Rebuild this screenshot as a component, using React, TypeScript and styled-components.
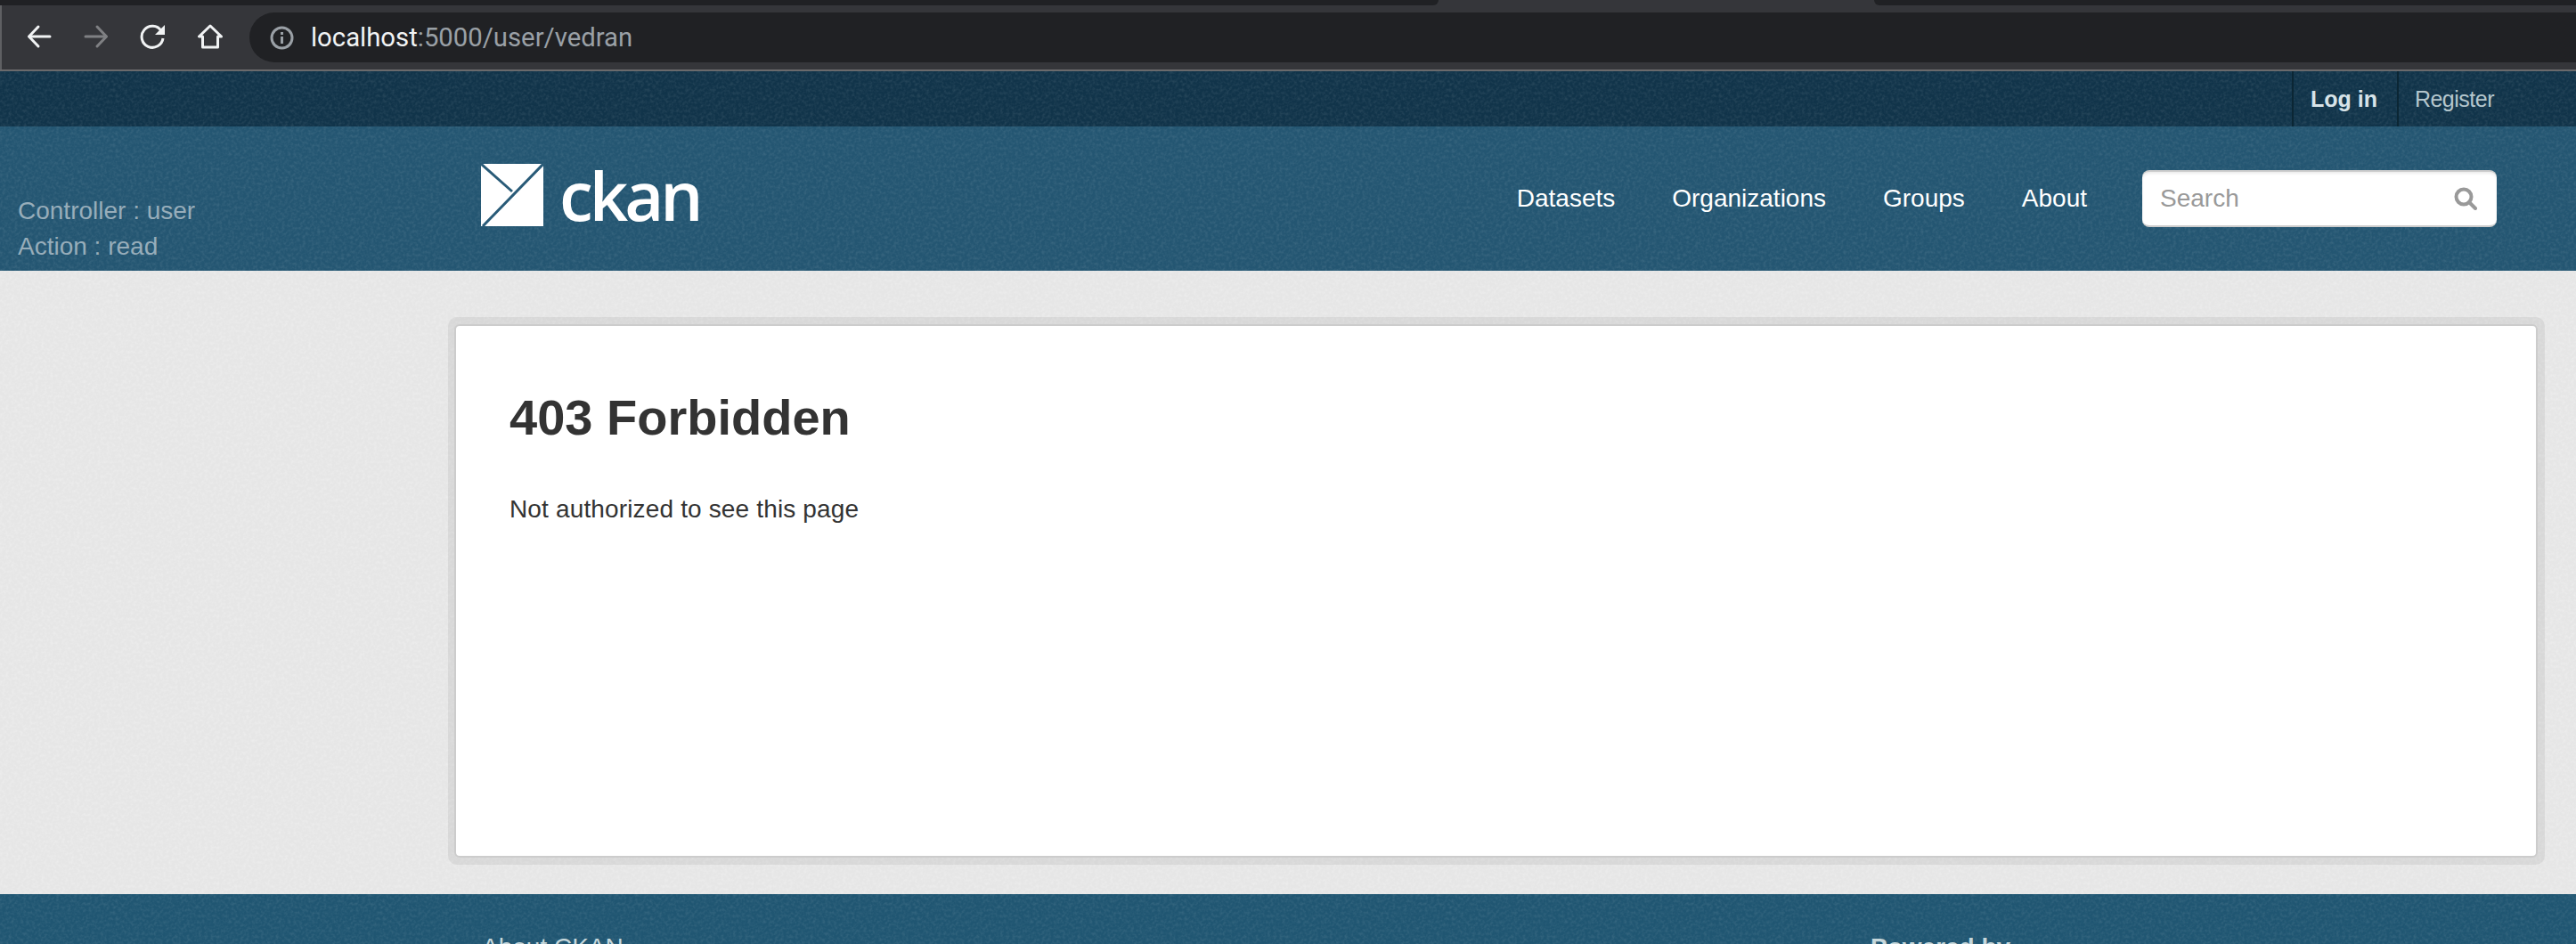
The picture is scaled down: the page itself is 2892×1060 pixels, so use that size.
import React from 'react';
import styled, { createGlobalStyle } from 'styled-components';

// speckle texture, alpha follows the red channel of the turbulence
const noise = (k: number) =>
  `url("data:image/svg+xml,%3Csvg xmlns='http://www.w3.org/2000/svg' width='300' height='300'%3E%3Cfilter id='n'%3E%3CfeTurbulence type='fractalNoise' baseFrequency='0.3' numOctaves='2' stitchTiles='stitch'/%3E%3CfeColorMatrix values='0 0 0 0 1 0 0 0 0 1 0 0 0 0 1 ${k} 0 0 0 ${-k * 0.4}'/%3E%3C/filter%3E%3Crect width='300' height='300' filter='url(%23n)'/%3E%3C/svg%3E")`;

const GlobalStyle = createGlobalStyle`
  html, body {
    margin: 0;
    height: 1060px;
    overflow: hidden;
    background: #e8e8e8;
    font-family: "Liberation Sans", Arial, sans-serif;
  }
  * {
    box-sizing: border-box;
  }
`;

const Page = styled.div`
  width: 2892px;
  height: 1060px;
  overflow: hidden;
  display: flex;
  flex-direction: column;
`;

const TabStrip = styled.div`
  height: 6px;
  flex: none;
  display: flex;
  justify-content: space-between;
  background: #35363a;
`;

const Tab = styled.div<{ $width: number; $side: 'left' | 'right' }>`
  width: ${(p) => p.$width}px;
  height: 6px;
  background: #202124;
  border-bottom-${(p) => p.$side}-radius: 6px;
`;

const Toolbar = styled.div`
  height: 74px;
  flex: none;
  display: flex;
  padding: 8px 0 10px 12px;
  align-items: stretch;
  background: #35363a;
  border-bottom: 2px solid #6a6a6c;
  box-shadow: inset 2px 0 0 #5f6063;
`;

const NavIcon = styled.div<{ $dim?: boolean }>`
  width: 64px;
  display: flex;
  align-items: center;
  justify-content: center;
  color: ${(p) => (p.$dim ? '#7f8083' : '#f1f3f4')};
`;

const AddressBar = styled.div`
  flex: 1;
  margin-left: 12px;
  height: 56px;
  display: flex;
  align-items: center;
  padding-left: 23px;
  gap: 19px;
  border-radius: 28px 0 0 28px;
  background: #202124;
  color: #9aa0a6;
  font-family: Roboto, "Liberation Sans", sans-serif;
  font-size: 29.3px;
`;

const InfoIcon = styled.svg`
  color: #9aa0a6;
  flex: none;
`;

const Host = styled.span`
  color: #f1f3f4;
`;

const UtilityBar = styled.div`
  height: 62px;
  flex: none;
  display: flex;
  justify-content: flex-end;
  padding-right: 72px;
  background-color: #11344a;
  background-image: ${noise(0.18)};
`;

const UtilityLink = styled.a<{ $bold?: boolean }>`
  display: flex;
  align-items: center;
  padding: ${(p) => (p.$bold ? '0 22px 0 19px' : '0 20px 0 18px')};
  border-left: 2px solid #0b2634;
  color: ${(p) => (p.$bold ? '#d7e3e8' : '#b4c6cd')};
  font-size: 25px;
  font-weight: ${(p) => (p.$bold ? 700 : 400)};
  letter-spacing: ${(p) => (p.$bold ? 0 : '-0.5px')};
`;

const Masthead = styled.header`
  height: 162px;
  flex: none;
  display: flex;
  align-items: center;
  padding: 0 89px 0 20px;
  background-color: #245672;
  background-image: ${noise(0.18)};
`;

const DebugInfo = styled.div`
  width: 520px;
  align-self: flex-end;
  padding-bottom: 7px;
  color: #97adba;
  font-size: 28px;
  line-height: 40px;
`;

const Logo = styled.a`
  display: flex;
  align-items: flex-start;
  gap: 18px;
  height: 70px;
  margin-top: -8px;
  color: #fff;
  text-decoration: none;
`;

const LogoText = styled.span`
  font-family: "Open Sans", sans-serif;
  font-size: 76px;
  font-weight: 600;
  line-height: 70px;
  letter-spacing: -4px;
`;

const Nav = styled.nav`
  margin-left: auto;
  margin-right: 30px;
  display: flex;
`;

const NavLink = styled.a`
  padding: 0 32px;
  color: #fff;
  font-size: 28px;
  line-height: 40px;
`;

const SearchBox = styled.form`
  width: 398px;
  height: 64px;
  display: flex;
  align-items: center;
  padding: 0 22px 0 20px;
  border: 2px solid #ccc;
  border-width: 2px 0 2px 0;
  border-radius: 8px;
  background: #fff;
  box-shadow: inset 0 2px 3px rgba(0, 0, 0, 0.08);
`;

const SearchInput = styled.input`
  flex: 1;
  min-width: 0;
  border: 0;
  outline: 0;
  padding: 0;
  background: transparent;
  font-family: "Liberation Sans", Arial, sans-serif;
  font-size: 28px;
  &::placeholder {
    color: #999;
    opacity: 1;
  }
`;

const Main = styled.main`
  height: 700px;
  flex: none;
  padding: 52px 35px 33px 503px;
  background-color: #e6e6e6;
  background-image: ${noise(0.5)};
`;

const CardFrame = styled.div`
  height: 100%;
  padding: 8px 8px 8px 7px;
  border-radius: 10px;
  background: rgba(0, 0, 0, 0.06);
`;

const Card = styled.section`
  height: 100%;
  padding: 65px 60px;
  border: 2px solid #ccc;
  border-radius: 6px;
  background: #fff;
`;

const Title = styled.h1`
  margin: 0 0 45px;
  color: #333;
  font-size: 56px;
  font-weight: 700;
  line-height: 76px;
`;

const Message = styled.p`
  margin: 0;
  color: #333;
  font-size: 28px;
  line-height: 40px;
  letter-spacing: 0.15px;
`;

const Footer = styled.footer`
  flex: 1;
  display: flex;
  padding: 40px 0 0 541px;
  background-color: #205672;
  background-image: ${noise(0.18)};
  color: #c6d7db;
  font-size: 28px;
  line-height: 40px;
`;

const FooterColumn = styled.div<{ $width?: number; $bold?: boolean }>`
  width: ${(p) => (p.$width ? `${p.$width}px` : 'auto')};
  font-weight: ${(p) => (p.$bold ? 700 : 400)};
`;

const Arrow = ({ flip }: { flip?: boolean }) => (
  <svg width="28" height="28" viewBox="0 0 28 28" fill="none" stroke="currentColor" strokeWidth="3" strokeLinecap="round" strokeLinejoin="round">
    <g transform={flip ? 'matrix(-1 0 0 1 28 0)' : undefined}>
      <path d="M26 14H3" />
      <path d="M13 3 2.5 14 13 25" />
    </g>
  </svg>
);

const Reload = () => (
  <svg width="30" height="30" viewBox="0 0 30 30" fill="none">
    <path d="M24 8.5A12 12 0 1 0 26 17" stroke="currentColor" strokeWidth="3" />
    <path d="M28 2v11H17z" fill="currentColor" />
  </svg>
);

const Home = () => (
  <svg width="28" height="28" viewBox="0 0 28 28" fill="none" stroke="currentColor" strokeWidth="3" strokeLinejoin="round">
    <path d="M14 2 1.5 14H5.5V26H22.5V14H26.5Z" />
  </svg>
);

const Info = () => (
  <InfoIcon width="27" height="27" viewBox="0 0 27 27" fill="none">
    <circle cx="13.5" cy="13.5" r="11.5" stroke="currentColor" strokeWidth="3" />
    <rect x="12" y="12" width="3" height="8" fill="currentColor" />
    <rect x="12" y="7" width="3" height="3" fill="currentColor" />
  </InfoIcon>
);

const Envelope = () => (
  <svg width="70" height="70" viewBox="0 0 70 70">
    <rect width="70" height="70" fill="#fff" />
    <path d="M0 0 35 31M70 0 2 70" stroke="#295b78" strokeWidth="3" fill="none" />
  </svg>
);

const SearchGlyph = () => (
  <svg width="26" height="26" viewBox="0 0 26 26" fill="none" stroke="#999" strokeWidth="4">
    <circle cx="11" cy="11" r="8.5" />
    <path d="M17 17l7 7" strokeLinecap="round" />
  </svg>
);

const navItems = ['Datasets', 'Organizations', 'Groups', 'About'];

export default function App() {
  return (
    <Page>
      <GlobalStyle />
      <TabStrip>
        <Tab $width={1615} $side="right" />
        <Tab $width={788} $side="left" />
      </TabStrip>
      <Toolbar>
        <NavIcon><Arrow /></NavIcon>
        <NavIcon $dim><Arrow flip /></NavIcon>
        <NavIcon><Reload /></NavIcon>
        <NavIcon><Home /></NavIcon>
        <AddressBar>
          <Info />
          <span><Host>localhost</Host>:5000/user/vedran</span>
        </AddressBar>
      </Toolbar>
      <UtilityBar>
        <UtilityLink $bold>Log in</UtilityLink>
        <UtilityLink>Register</UtilityLink>
      </UtilityBar>
      <Masthead>
        <DebugInfo>
          <div>Controller : user</div>
          <div>Action : read</div>
        </DebugInfo>
        <Logo>
          <Envelope />
          <LogoText>ckan</LogoText>
        </Logo>
        <Nav>
          {navItems.map((item) => (
            <NavLink key={item}>{item}</NavLink>
          ))}
        </Nav>
        <SearchBox>
          <SearchInput placeholder="Search" />
          <SearchGlyph />
        </SearchBox>
      </Masthead>
      <Main>
        <CardFrame>
          <Card>
            <Title>403 Forbidden</Title>
            <Message>Not authorized to see this page</Message>
          </Card>
        </CardFrame>
      </Main>
      <Footer>
        <FooterColumn $width={1559}>About CKAN</FooterColumn>
        <FooterColumn $bold>Powered by</FooterColumn>
      </Footer>
    </Page>
  );
}
